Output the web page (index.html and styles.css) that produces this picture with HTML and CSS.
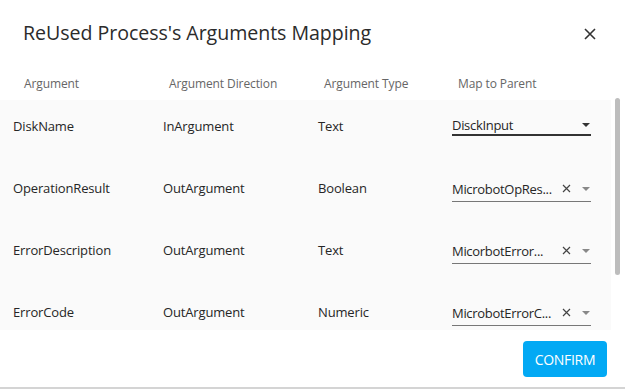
FILE: index.html
```html
<!DOCTYPE html>
<html>
<head>
<meta charset="utf-8">
<link rel="stylesheet" href="styles.css">
</head>
<body>
<div class="dialog">
  <div class="title-bar">
    <h1 class="title">ReUsed Process's Arguments Mapping</h1>
    <svg class="close" width="14" height="14" viewBox="0 0 14 14"><path d="M2 2L12 12M12 2L2 12" stroke="#333" stroke-width="1.6" fill="none"/></svg>
  </div>
  <div class="head-row">
    <span>Argument</span>
    <span>Argument Direction</span>
    <span>Argument Type</span>
    <span>Map to Parent</span>
  </div>
  <div class="body">
    <div class="row">
      <span class="cell">DiskName</span>
      <span class="cell">InArgument</span>
      <span class="cell">Text</span>
      <div class="select focused">
        <span class="value">DisckInput</span>
        <svg class="arrow" width="8" height="4" viewBox="0 0 8 4"><path d="M0 0H8L4 4Z" fill="#333"/></svg>
      </div>
    </div>
    <div class="row">
      <span class="cell">OperationResult</span>
      <span class="cell">OutArgument</span>
      <span class="cell">Boolean</span>
      <div class="select">
        <span class="value">MicrobotOpRes...</span>
        <svg class="clear" width="9" height="9" viewBox="0 0 9 9"><path d="M1 1L8 8M8 1L1 8" stroke="#444" stroke-width="1.2" fill="none"/></svg>
        <svg class="arrow" width="8" height="4" viewBox="0 0 8 4"><path d="M0 0H8L4 4Z" fill="#888"/></svg>
      </div>
    </div>
    <div class="row">
      <span class="cell">ErrorDescription</span>
      <span class="cell">OutArgument</span>
      <span class="cell">Text</span>
      <div class="select">
        <span class="value">MicorbotError...</span>
        <svg class="clear" width="9" height="9" viewBox="0 0 9 9"><path d="M1 1L8 8M8 1L1 8" stroke="#444" stroke-width="1.2" fill="none"/></svg>
        <svg class="arrow" width="8" height="4" viewBox="0 0 8 4"><path d="M0 0H8L4 4Z" fill="#888"/></svg>
      </div>
    </div>
    <div class="row">
      <span class="cell">ErrorCode</span>
      <span class="cell">OutArgument</span>
      <span class="cell">Numeric</span>
      <div class="select">
        <span class="value">MicrobotErrorC...</span>
        <svg class="clear" width="9" height="9" viewBox="0 0 9 9"><path d="M1 1L8 8M8 1L1 8" stroke="#444" stroke-width="1.2" fill="none"/></svg>
        <svg class="arrow" width="8" height="4" viewBox="0 0 8 4"><path d="M0 0H8L4 4Z" fill="#888"/></svg>
      </div>
    </div>
    <div class="scrollbar"></div>
  </div>
  <div class="footer">
    <button class="confirm">CONFIRM</button>
  </div>
</div>
</body>
</html>
```
FILE: styles.css
```css
* { box-sizing: border-box; }
html, body { margin: 0; padding: 0; background: #fff; }
body { font-family: "Open Sans", "Noto Sans", sans-serif; color: #333; }
.dialog {
  width: 625px;
  height: 389px;
  border-bottom: 2px solid #d4d4d4;
  display: flex;
  flex-direction: column;
  overflow: hidden;
}
.title-bar {
  height: 66px;
  display: flex;
  align-items: center;
  justify-content: space-between;
  padding: 0 28px 2px 23px;
}
.title {
  margin: 0;
  font-size: 19.6px;
  font-weight: 500;
  color: #2b2b2b;
  letter-spacing: -0.05px;
}
.close { margin-top: 4px; }
.head-row {
  height: 34px;
  display: grid;
  grid-template-columns: 145px 155px 134px 1fr;
  align-items: center;
  padding-left: 24px;
  font-size: 12px;
  color: #666;
  letter-spacing: -0.1px;
}
.body {
  position: relative;
  height: 230px;
  width: 611px;
  background: #fafafa;
}
.row {
  height: 62px;
  display: grid;
  grid-template-columns: 150px 155px 134px 139px;
  padding: 16px 0 0 13px;
  align-items: start;
  font-size: 13px;
  letter-spacing: -0.15px;
}
.cell { line-height: 20px; font-weight: 500; color: #262626; }
.select {
  display: flex;
  align-items: center;
  height: 24px;
  border-bottom: 1px solid #777;
  padding-bottom: 2px;
}
.select.focused {
  height: 20px;
  border-bottom: 2px solid #333;
  padding-bottom: 0;
}
.value { flex: 1; font-weight: 500; color: #262626; line-height: 20px; letter-spacing: -0.3px; }
.clear { margin-right: 11px; }
.arrow { margin-right: 1px; }
.scrollbar {
  position: absolute;
  right: -9px;
  top: -2px;
  width: 5px;
  height: 177px;
  border-radius: 3px;
  background: #bdbdbd;
}
.footer {
  flex: 1;
  display: flex;
  justify-content: flex-end;
  align-items: flex-start;
  padding: 11px 18px 0 0;
}
.confirm {
  width: 84px;
  height: 36px;
  border: none;
  border-radius: 4px;
  background: #03a9f4;
  color: #fff;
  font-family: inherit;
  font-size: 14px;
  padding: 0;
  letter-spacing: -0.3px;
}
```
